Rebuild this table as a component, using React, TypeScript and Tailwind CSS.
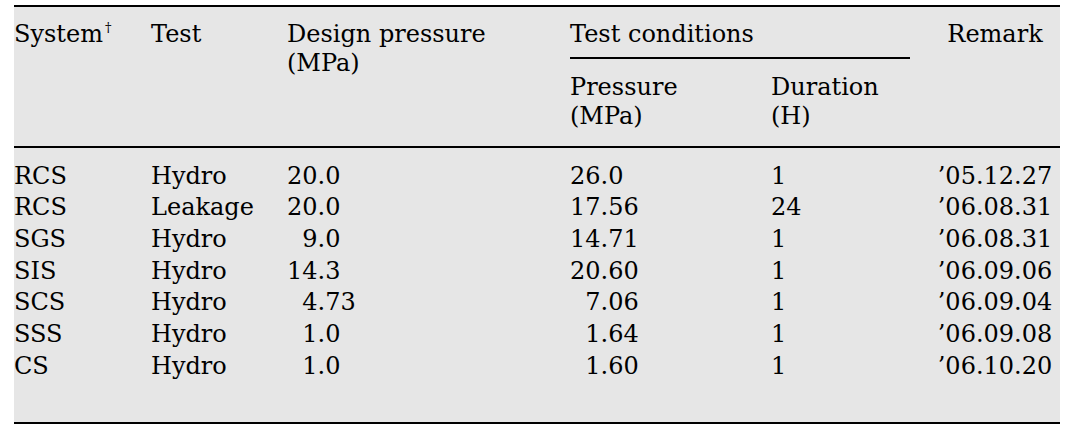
import React from "react";

const rows: [string, string, string, string, string, string][] = [
  ["RCS", "Hydro", "20.0", "26.0", "1", "\u201905.12.27"],
  ["RCS", "Leakage", "20.0", "17.56", "24", "\u201906.08.31"],
  ["SGS", "Hydro", "9.0", "14.71", "1", "\u201906.08.31"],
  ["SIS", "Hydro", "14.3", "20.60", "1", "\u201906.09.06"],
  ["SCS", "Hydro", "4.73", "7.06", "1", "\u201906.09.04"],
  ["SSS", "Hydro", "1.0", "1.64", "1", "\u201906.09.08"],
  ["CS", "Hydro", "1.0", "1.60", "1", "\u201906.10.20"],
];

function pad(v: string) {
  const i = v.indexOf(".");
  return i === 1 ? "\u2007" + v : v;
}

const cols = "grid grid-cols-[137px_136px_283px_201px_159px_130px]";

export default function App() {
  return (
    <div className="min-h-[429px] w-[1067px] bg-white pl-[14px] pt-[5px] font-['DejaVu_Serif',serif] text-[24px] text-black">
      <div className="w-[1046px] border-y-2 border-black bg-[#e6e6e6]">
        <div className={`${cols} border-b-2 border-black pt-[13px] pb-[15px] leading-[29px]`}>
          <div className="row-span-2">
            System<sup className="relative -top-[10px] ml-[2px] text-[13px]">†</sup>
          </div>
          <div className="row-span-2">Test</div>
          <div className="row-span-2">
            Design pressure
            <br />
            (MPa)
          </div>
          <div className="col-span-2 mr-[20px] border-b-2 border-black pb-[8px]">Test conditions</div>
          <div className="row-span-2 text-center">Remark</div>
          <div className="mt-[14px]">
            Pressure
            <br />
            (MPa)
          </div>
          <div className="mt-[14px]">
            Duration
            <br />
            (H)
          </div>
        </div>
        <div className="pt-[12.5px] pb-[39.5px] leading-[31.7px]">
          {rows.map((r, i) => (
            <div key={i} className={cols}>
              <div>{r[0]}</div>
              <div>{r[1]}</div>
              <div className="whitespace-pre">{pad(r[2])}</div>
              <div className="whitespace-pre">{pad(r[3])}</div>
              <div>{r[4]}</div>
              <div className="text-center">{r[5]}</div>
            </div>
          ))}
        </div>
      </div>
    </div>
  );
}
